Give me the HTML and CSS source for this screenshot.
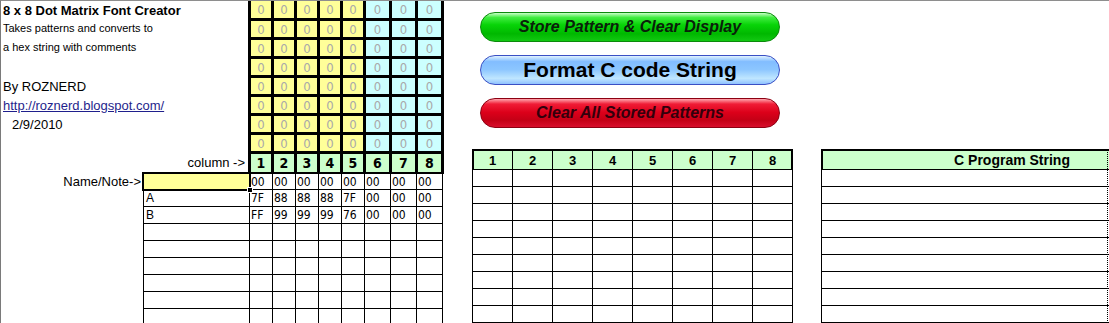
FILE: index.html
```html
<!DOCTYPE html>
<html lang="en">
<head>
    <meta charset="UTF-8">
    <meta name="viewport" content="width=device-width, initial-scale=1.0">
    <title>8 x 8 Dot Matrix Font Creator</title>
    <link rel="stylesheet" href="styles.css">
</head>
<body>
    <div class="sheet">
        <div class="left">
            <div class="top-left">
                <div class="info">
                    <div class="line title">8 x 8 Dot Matrix Font Creator</div>
                    <div class="line small">Takes patterns and converts to</div>
                    <div class="line small">a hex string with comments</div>
                    <div class="line"></div>
                    <div class="line">By ROZNERD</div>
                    <div class="line"><a href="http://roznerd.blogspot.com/">http://roznerd.blogspot.com/</a></div>
                    <div class="line date">2/9/2010</div>
                    <div class="line"></div>
                    <div class="line label">column -&gt;</div>
                </div>
                <!-- 8 x 8 pattern, first 5 columns yellow, last 3 cyan -->
                <div class="matrix">
                    <span class="dot y">0</span><span class="dot y">0</span><span class="dot y">0</span><span class="dot y">0</span><span class="dot y">0</span><span class="dot c">0</span><span class="dot c">0</span><span class="dot c">0</span>
                    <span class="dot y">0</span><span class="dot y">0</span><span class="dot y">0</span><span class="dot y">0</span><span class="dot y">0</span><span class="dot c">0</span><span class="dot c">0</span><span class="dot c">0</span>
                    <span class="dot y">0</span><span class="dot y">0</span><span class="dot y">0</span><span class="dot y">0</span><span class="dot y">0</span><span class="dot c">0</span><span class="dot c">0</span><span class="dot c">0</span>
                    <span class="dot y">0</span><span class="dot y">0</span><span class="dot y">0</span><span class="dot y">0</span><span class="dot y">0</span><span class="dot c">0</span><span class="dot c">0</span><span class="dot c">0</span>
                    <span class="dot y">0</span><span class="dot y">0</span><span class="dot y">0</span><span class="dot y">0</span><span class="dot y">0</span><span class="dot c">0</span><span class="dot c">0</span><span class="dot c">0</span>
                    <span class="dot y">0</span><span class="dot y">0</span><span class="dot y">0</span><span class="dot y">0</span><span class="dot y">0</span><span class="dot c">0</span><span class="dot c">0</span><span class="dot c">0</span>
                    <span class="dot y">0</span><span class="dot y">0</span><span class="dot y">0</span><span class="dot y">0</span><span class="dot y">0</span><span class="dot c">0</span><span class="dot c">0</span><span class="dot c">0</span>
                    <span class="dot y">0</span><span class="dot y">0</span><span class="dot y">0</span><span class="dot y">0</span><span class="dot y">0</span><span class="dot c">0</span><span class="dot c">0</span><span class="dot c">0</span>
                    <span class="colnum">1</span><span class="colnum">2</span><span class="colnum">3</span><span class="colnum">4</span><span class="colnum">5</span><span class="colnum">6</span><span class="colnum">7</span><span class="colnum">8</span>
                </div>
            </div>
            <div class="entries">
                <div class="labels">
                    <div class="label">Name/Note-&gt;</div>
                </div>
                <div class="codes">
                    <div class="cell name sel"></div><div class="cell">00</div><div class="cell">00</div><div class="cell">00</div><div class="cell">00</div><div class="cell">00</div><div class="cell">00</div><div class="cell">00</div><div class="cell">00</div>
                    <div class="cell name">A</div><div class="cell">7F</div><div class="cell">88</div><div class="cell">88</div><div class="cell">88</div><div class="cell">7F</div><div class="cell">00</div><div class="cell">00</div><div class="cell">00</div>
                    <div class="cell name">B</div><div class="cell">FF</div><div class="cell">99</div><div class="cell">99</div><div class="cell">99</div><div class="cell">76</div><div class="cell">00</div><div class="cell">00</div><div class="cell">00</div>
                    <div class="cell name"></div><div class="cell"></div><div class="cell"></div><div class="cell"></div><div class="cell"></div><div class="cell"></div><div class="cell"></div><div class="cell"></div><div class="cell"></div>
                    <div class="cell name"></div><div class="cell"></div><div class="cell"></div><div class="cell"></div><div class="cell"></div><div class="cell"></div><div class="cell"></div><div class="cell"></div><div class="cell"></div>
                    <div class="cell name"></div><div class="cell"></div><div class="cell"></div><div class="cell"></div><div class="cell"></div><div class="cell"></div><div class="cell"></div><div class="cell"></div><div class="cell"></div>
                    <div class="cell name"></div><div class="cell"></div><div class="cell"></div><div class="cell"></div><div class="cell"></div><div class="cell"></div><div class="cell"></div><div class="cell"></div><div class="cell"></div>
                    <div class="cell name"></div><div class="cell"></div><div class="cell"></div><div class="cell"></div><div class="cell"></div><div class="cell"></div><div class="cell"></div><div class="cell"></div><div class="cell"></div>
                    <div class="cell name"></div><div class="cell"></div><div class="cell"></div><div class="cell"></div><div class="cell"></div><div class="cell"></div><div class="cell"></div><div class="cell"></div><div class="cell"></div>
                </div>
            </div>
        </div>

        <div class="right">
            <div class="buttons">
                <button class="pill green">Store Pattern &amp; Clear Display</button>
                <button class="pill blue">Format C code String</button>
                <button class="pill red">Clear All Stored Patterns</button>
            </div>
            <div class="lists">
                <div class="store">
                    <div class="head">1</div><div class="head">2</div><div class="head">3</div><div class="head">4</div><div class="head">5</div><div class="head">6</div><div class="head">7</div><div class="head">8</div>
                    <div></div><div></div><div></div><div></div><div></div><div></div><div></div><div></div>
                    <div></div><div></div><div></div><div></div><div></div><div></div><div></div><div></div>
                    <div></div><div></div><div></div><div></div><div></div><div></div><div></div><div></div>
                    <div></div><div></div><div></div><div></div><div></div><div></div><div></div><div></div>
                    <div></div><div></div><div></div><div></div><div></div><div></div><div></div><div></div>
                    <div></div><div></div><div></div><div></div><div></div><div></div><div></div><div></div>
                    <div></div><div></div><div></div><div></div><div></div><div></div><div></div><div></div>
                    <div></div><div></div><div></div><div></div><div></div><div></div><div></div><div></div>
                    <div></div><div></div><div></div><div></div><div></div><div></div><div></div><div></div>
                </div>
                <div class="cstring">
                    <div class="head">C Program String</div>
                    <div></div><div></div><div></div><div></div><div></div><div></div><div></div><div></div><div></div>
                </div>
            </div>
        </div>
    </div>
</body>
</html>
```

FILE: styles.css
```css
html, body {
    margin: 0;
    padding: 0;
}
body {
    width: 1109px;
    height: 323px;
    overflow: hidden;
    background-color: #fff;
    font-family: "Liberation Sans", Arial, sans-serif;
    color: #000;
}
.sheet {
    display: flex;
    height: 322px;
    border-top: 1px solid #8e8e8e;
    border-left: 1px solid #7a7a7a;
    overflow: hidden;
}
.left {
    flex-shrink: 0;
    display: flex;
    flex-direction: column;
}
.top-left {
    display: flex;
}

/* info text on the left */
.info {
    width: 247px;
    display: grid;
    grid-template-rows: 18px repeat(7, 19px) 22px;
}
.line {
    display: flex;
    align-items: flex-end;
    padding: 0 0 1px 2px;
    font-size: 13px;
    line-height: 15px;
    white-space: nowrap;
}
.line.title {
    font-weight: bold;
}
.line.small {
    font-size: 11px;
    padding-bottom: 2px;
}
.line.date {
    padding-left: 11px;
}
.line a {
    color: #1f1f8c;
    text-decoration: underline;
}
.line.label {
    justify-content: flex-end;
    align-items: center;
    padding: 0 3px 1px 0;
}

/* 8 x 8 pattern */
.matrix {
    display: grid;
    grid-template-columns: repeat(5, 20px) repeat(3, 23px);
    grid-template-rows: 17px repeat(7, 16px) 18px;
    gap: 3px;
    padding: 0 3px 2px;
    background-color: #000;
}
.dot {
    display: flex;
    align-items: center;
    justify-content: center;
    font-family: "Liberation Sans Narrow", "DejaVu Sans Condensed", sans-serif;
    font-size: 13px;
    color: #a9a9a9;
}
.dot.y {
    background-color: #ffff99;
}
.dot.c {
    background-color: #ccffff;
}
.colnum {
    display: flex;
    align-items: center;
    justify-content: center;
    background-color: #ccffcc;
    font-family: "Liberation Sans Narrow", "DejaVu Sans Condensed", sans-serif;
    font-weight: bold;
    font-size: 14px;
}

/* hex codes under the pattern */
.entries {
    display: flex;
}
.labels {
    width: 142px;
}
.labels .label {
    height: 15px;
    line-height: 15px;
    font-size: 13px;
    text-align: right;
    padding-right: 2px;
}
.codes {
    display: grid;
    grid-template-columns: 105px repeat(5, 22px) repeat(3, 25px);
    grid-template-rows: 15px;
    grid-auto-rows: 16px;
    gap: 1px;
    padding: 0 1px 1px;
    background-color: #000;
}
.cell {
    background-color: #fff;
    font-family: "Liberation Sans Narrow", "DejaVu Sans Condensed", sans-serif;
    font-size: 12px;
    line-height: 16px;
    padding-left: 1px;
}
.cell.name {
    font-family: "Liberation Sans", Arial, sans-serif;
    font-size: 12px;
    padding-left: 2px;
}
.cell.sel {
    position: relative;
    background-color: #ffff99;
    outline: 2px solid #000;
}
.cell.sel:after {
    content: "";
    position: absolute;
    right: -4px;
    bottom: -4px;
    width: 4px;
    height: 4px;
    background-color: #000;
    border: 1px solid #fff;
}

/* buttons */
.right {
    flex-shrink: 0;
    display: flex;
    flex-direction: column;
}
.buttons {
    height: 151px;
    box-sizing: border-box;
    padding: 11px 0 0 36px;
    display: flex;
    flex-direction: column;
    gap: 13px;
}
.pill {
    width: 300px;
    height: 30px;
    box-sizing: border-box;
    margin: 0;
    padding: 0;
    border-radius: 15px;
    border: 1px solid;
    font-family: "Liberation Sans", Arial, sans-serif;
    font-weight: bold;
    font-style: italic;
    font-size: 16px;
    cursor: pointer;
}
.pill.green {
    border-color: #0b8a0b;
    color: #0a200a;
    background: linear-gradient(to bottom, #c8ffc8 0%, #40ec40 16%, #08d408 42%, #00b800 74%, #12c812 100%);
}
.pill.blue {
    border-color: #3a4fc4;
    color: #000;
    font-style: normal;
    font-size: 21px;
    background: linear-gradient(to bottom, #e0f2ff 0%, #82bdff 20%, #8cc6ff 48%, #bfe6ff 80%, #90c2ff 100%);
}
.pill.red {
    border-color: #8c0012;
    color: #32000c;
    background: linear-gradient(to bottom, #ffa6ae 0%, #f01c36 18%, #dc001a 48%, #c40016 76%, #d80e2c 100%);
}

/* stored patterns and C string tables */
.lists {
    display: flex;
    margin-left: 28px;
}
.store {
    flex-shrink: 0;
    display: grid;
    grid-template-columns: repeat(8, 39px);
    grid-template-rows: 18px;
    grid-auto-rows: 16px;
    gap: 1px;
    padding: 2px 1px 1px;
    background-color: #000;
}
.store div, .cstring div {
    background-color: #fff;
}
.store .head, .cstring .head {
    display: flex;
    align-items: center;
    justify-content: center;
    background-color: #ccffcc;
    font-weight: bold;
    font-size: 13px;
}
.store .head:first-child {
    box-shadow: inset 1px 0 #000;
}
.store .head:nth-child(8) {
    box-shadow: inset -1px 0 #000;
}
.cstring {
    flex-shrink: 0;
    position: relative;
    margin-left: 28px;
    width: 380px;
    display: grid;
    grid-template-rows: 18px;
    grid-auto-rows: 16px;
    row-gap: 1px;
    padding: 2px 0 1px 1px;
    background-color: #000;
}
.cstring .head {
    font-size: 14px;
    box-shadow: inset 1px 0 #000;
}
.cstring:after {
    content: "";
    position: absolute;
    left: 286px;
    top: 0;
    bottom: 0;
    border-left: 1px dotted #000;
}
```
